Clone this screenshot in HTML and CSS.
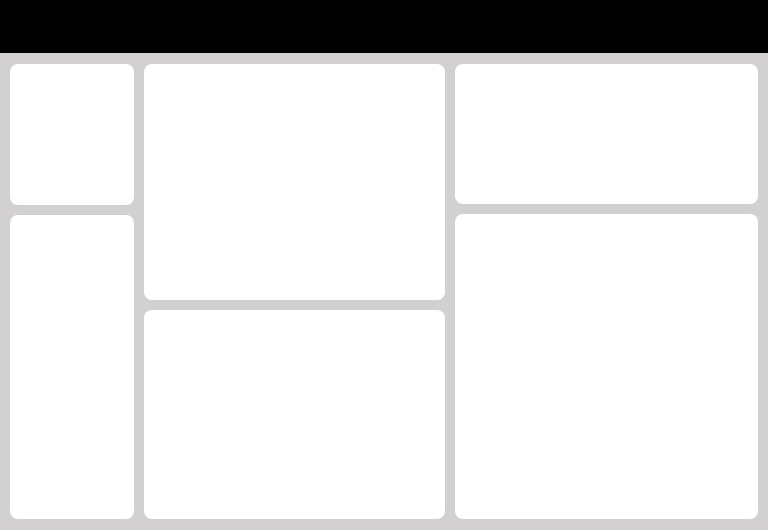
FILE: index.html
```html
<!DOCTYPE html>
<html>
<head>
<meta charset="utf-8">
<link rel="stylesheet" href="styles.css">
</head>
<body>
<header class="topbar"></header>
<main class="board">
  <div class="col col-a">
    <section class="card card-a1"></section>
    <section class="card card-fill"></section>
  </div>
  <div class="col col-b">
    <section class="card card-b1"></section>
    <section class="card card-fill"></section>
  </div>
  <div class="col col-c">
    <section class="card card-c1"></section>
    <section class="card card-fill"></section>
  </div>
</main>
</body>
</html>
```

FILE: styles.css
```css
html, body {
  margin: 0;
  padding: 0;
  width: 768px;
  height: 530px;
  overflow: hidden;
  font-family: "Liberation Sans", Arial, sans-serif;
  background: #d2d0d0;
}
.topbar {
  height: 53px;
  background: #000;
}
.board {
  box-sizing: border-box;
  height: 477px;
  padding: 11px 10px 11px 10px;
  display: grid;
  grid-template-columns: 124px 301px 1fr;
  column-gap: 10px;
}
.col {
  display: flex;
  flex-direction: column;
  gap: 10px;
  min-height: 0;
}
.card {
  background: #fff;
  border-radius: 8px;
}
.card-a1 { height: 141px; }
.card-b1 { height: 236px; }
.card-c1 { height: 140px; }
.card-fill { flex: 1; }
```
